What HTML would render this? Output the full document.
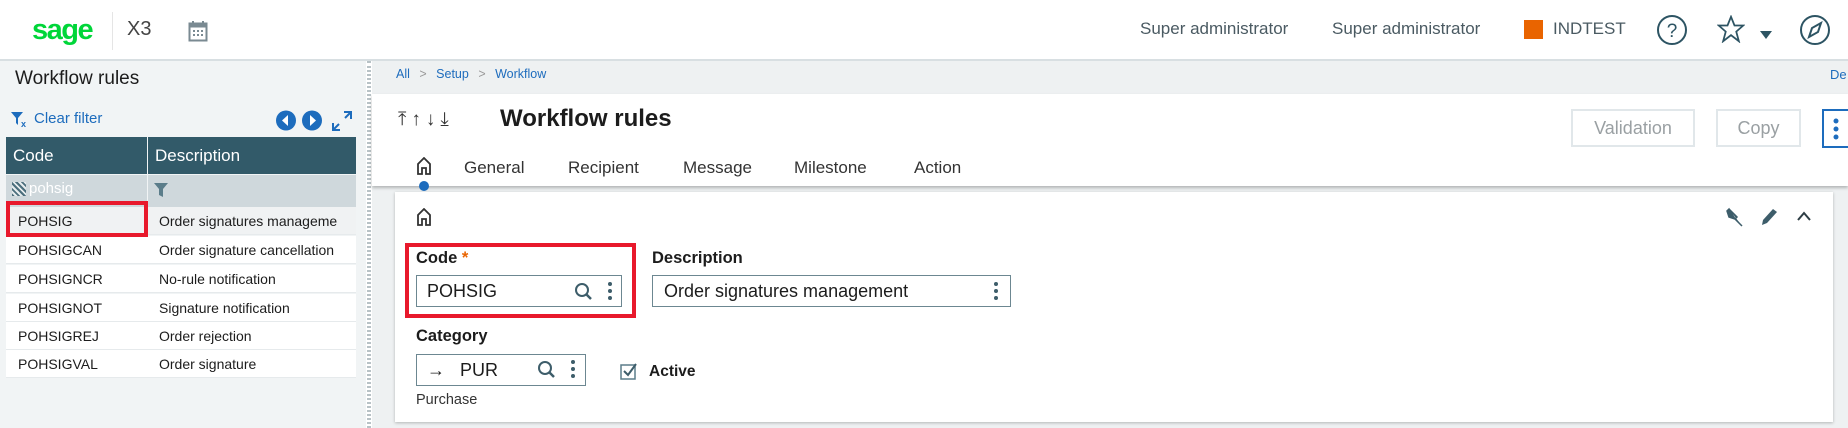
<!DOCTYPE html>
<html><head><meta charset="utf-8"><style>
*{box-sizing:border-box;margin:0;padding:0}
body{width:1848px;height:428px;overflow:hidden;background:#fff;font-family:"Liberation Sans",sans-serif;color:#1c1c1c;position:relative}
.a{position:absolute;white-space:nowrap}
.hdr{left:0;top:0;width:1848px;height:61px;background:#fff;border-bottom:2px solid #d8dfe2}
.lp{left:0;top:61px;width:366px;height:367px;background:#f1f4f5}
.rp{left:372px;top:61px;width:1476px;height:367px;background:#eef1f2}
.th{background:#325a69;color:#fff;font-size:17px;height:37px;line-height:37px;padding-left:7px}
.row{left:6px;width:350px;height:28px;background:#fff;border-bottom:1px solid #e6eaec;font-size:14px;line-height:28px;overflow:hidden}
.row span{position:absolute;top:0}
.btn{border:2px solid #e1e7ea;color:#9aa0a3;font-size:18px;text-align:center;line-height:34px;background:#fff}
.inp{border:1px solid #6c8791;background:#fff;height:32px;font-size:18px;line-height:30px}
.lbl{font-size:16.5px;font-weight:bold;color:#1c1c1c}
.tab{font-size:17px;color:#333;top:158px}
</style></head><body>
<div class="a hdr"></div>
<div class="a" style="left:32px;top:14px;font-size:29px;font-weight:bold;color:#00d639;letter-spacing:-1.5px">sage</div>
<div class="a" style="left:112px;top:12px;width:1px;height:38px;background:#e5e5e5"></div>
<div class="a" style="left:127px;top:18px;font-size:20px;color:#444">X3</div>
<svg class="a" style="left:188px;top:20px" width="20" height="22" viewBox="0 0 20 22"><rect x="1.5" y="3.5" width="17" height="17" fill="none" stroke="#7a8a92" stroke-width="2"/><rect x="1.5" y="3.5" width="17" height="4" fill="#7a8a92"/><line x1="5" y1="1" x2="5" y2="5" stroke="#7a8a92" stroke-width="2"/><line x1="15" y1="1" x2="15" y2="5" stroke="#7a8a92" stroke-width="2"/><g fill="#7a8a92"><rect x="5" y="10" width="2" height="2"/><rect x="9" y="10" width="2" height="2"/><rect x="13" y="10" width="2" height="2"/><rect x="5" y="14" width="2" height="2"/><rect x="9" y="14" width="2" height="2"/><rect x="13" y="14" width="2" height="2"/></g></svg>
<div class="a" style="left:1140px;top:19px;font-size:17px;color:#4a5a62">Super administrator</div>
<div class="a" style="left:1332px;top:19px;font-size:17px;color:#4a5a62">Super administrator</div>
<div class="a" style="left:1524px;top:20px;width:19px;height:19px;background:#e96400"></div>
<div class="a" style="left:1553px;top:19px;font-size:17px;color:#4a5a62">INDTEST</div>
<svg class="a" style="left:1656px;top:14px" width="32" height="32"><circle cx="16" cy="16" r="14" fill="none" stroke="#2d5463" stroke-width="2"/><text x="16" y="23" font-size="19" text-anchor="middle" fill="#2d5463" font-family="Liberation Sans">?</text></svg>
<svg class="a" style="left:1717px;top:15px" width="28" height="28" viewBox="0 0 32 32"><path d="M16 2 L20 12 L30 12 L22 19 L25 30 L16 23 L7 30 L10 19 L2 12 L12 12 Z" fill="none" stroke="#2d5463" stroke-width="2"/></svg>
<svg class="a" style="left:1760px;top:31px" width="12" height="9"><path d="M0 0 L12 0 L6 8 Z" fill="#2d5463"/></svg>
<svg class="a" style="left:1799px;top:14px" width="32" height="32" viewBox="0 0 32 32"><circle cx="16" cy="16" r="14" fill="none" stroke="#2d5463" stroke-width="2"/><path d="M22 9 L13 14 L10 23 L19 18 Z" fill="none" stroke="#2d5463" stroke-width="2"/></svg>

<div class="a lp"></div>
<div class="a" style="left:15px;top:68px;font-size:19px">Workflow rules</div>
<svg class="a" style="left:11px;top:111px" width="17" height="16"><path d="M0 1 H12 L7 7 V14 L5 12 V7 Z" fill="#1d6cbd"/><text x="10" y="16" font-size="9" fill="#1d6cbd" font-weight="bold">x</text></svg>
<div class="a" style="left:34px;top:110px;font-size:15px;color:#1d6cbd">Clear filter</div>
<svg class="a" style="left:276px;top:110px" width="48" height="21"><circle cx="10" cy="10.5" r="10" fill="#1d6cbd"/><path d="M12 5 L6 10.5 L12 16 Z" fill="#fff"/><circle cx="36" cy="10.5" r="10" fill="#1d6cbd"/><path d="M34 5 L40 10.5 L34 16 Z" fill="#fff"/></svg>
<svg class="a" style="left:332px;top:111px" width="20" height="20"><path d="M12 1 H19 V8 M19 1 L13 7 M8 19 H1 V12 M1 19 L7 13" fill="none" stroke="#1d6cbd" stroke-width="2"/></svg>
<div class="a th" style="left:6px;top:137px;width:141px">Code</div>
<div class="a th" style="left:148px;top:137px;width:208px">Description</div>
<div class="a" style="left:6px;top:175px;width:141px;height:32px;background:#cfd8dc"></div>
<div class="a" style="left:148px;top:175px;width:208px;height:32px;background:#cfd8dc"></div>
<div class="a" style="left:12px;top:182px;width:14px;height:14px;background:repeating-linear-gradient(45deg,#4c6f7d 0 2px,#e5ebed 2px 4px)"></div>
<div class="a" style="left:29px;top:180px;font-size:15px;color:#fff">pohsig</div>
<svg class="a" style="left:154px;top:183px" width="14" height="14"><path d="M0 0 H14 L9 6 V14 L5 12 V6 Z" fill="#5b7d8a"/></svg>
<div class="a row" style="top:207px;background:#f0f2f3"><span style="left:12px">POHSIG</span><span style="left:153px">Order signatures manageme</span></div>
<div class="a row" style="top:236px"><span style="left:12px">POHSIGCAN</span><span style="left:153px">Order signature cancellation</span></div>
<div class="a row" style="top:265px"><span style="left:12px">POHSIGNCR</span><span style="left:153px">No-rule notification</span></div>
<div class="a row" style="top:294px"><span style="left:12px">POHSIGNOT</span><span style="left:153px">Signature notification</span></div>
<div class="a row" style="top:322px"><span style="left:12px">POHSIGREJ</span><span style="left:153px">Order rejection</span></div>
<div class="a row" style="top:350px"><span style="left:12px">POHSIGVAL</span><span style="left:153px">Order signature</span></div>
<div class="a" style="left:6px;top:201px;width:142px;height:36px;border:4px solid #e8192c"></div>
<div class="a" style="left:367px;top:61px;width:4px;height:367px;border-left:2px dotted #b8c2c6;border-right:2px dotted #b8c2c6"></div>

<div class="a rp"></div>
<div class="a" style="left:396px;top:67px;font-size:12.5px;color:#1d6cbd">All <span style="color:#999;margin:0 6px">&gt;</span> Setup <span style="color:#999;margin:0 6px">&gt;</span> Workflow</div>
<div class="a" style="left:1830px;top:67px;font-size:13px;color:#1d6cbd">De</div>
<div class="a" style="left:372px;top:94px;width:1476px;height:92px;background:#fff;box-shadow:0 2px 3px rgba(0,0,0,.25)"></div>
<div class="a" style="left:398px;top:109px;font-size:19px;color:#333;letter-spacing:5px">⤒↑↓⤓</div>
<div class="a" style="left:500px;top:105px;font-size:24px;font-weight:bold">Workflow rules</div>
<div class="a btn" style="left:1571px;top:109px;width:124px;height:38px">Validation</div>
<div class="a btn" style="left:1716px;top:109px;width:85px;height:38px">Copy</div>
<div class="a" style="left:1822px;top:109px;width:40px;height:39px;border:2px solid #1d6cbd;background:#fff"></div>
<svg class="a" style="left:1833px;top:118px" width="6" height="22"><circle cx="3" cy="3" r="2.5" fill="#1d6cbd"/><circle cx="3" cy="11" r="2.5" fill="#1d6cbd"/><circle cx="3" cy="19" r="2.5" fill="#1d6cbd"/></svg>
<svg class="a" style="left:416px;top:157px" width="16" height="18"><path d="M2 17 V7 L8 1 L14 7 V17 H10 V11 H6 V17 Z" fill="none" stroke="#333" stroke-width="1.8"/></svg>
<div class="a" style="left:419px;top:181px;width:10px;height:10px;border-radius:50%;background:#1d6cbd"></div>
<div class="a tab" style="left:464px">General</div>
<div class="a tab" style="left:568px">Recipient</div>
<div class="a tab" style="left:683px">Message</div>
<div class="a tab" style="left:794px">Milestone</div>
<div class="a tab" style="left:914px">Action</div>

<div class="a" style="left:395px;top:192px;width:1438px;height:230px;background:#fff;box-shadow:0 1px 3px rgba(0,0,0,.25)"></div>
<svg class="a" style="left:416px;top:208px" width="16" height="18"><path d="M2 17 V7 L8 1 L14 7 V17 H10 V11 H6 V17 Z" fill="none" stroke="#333" stroke-width="1.8"/></svg>
<svg class="a" style="left:1725px;top:207px" width="20" height="20"><path d="M4 2 L12 10 L10 12 L17 19 M4 2 L2 4 L4 10 L10 12 Z" fill="#3d5d6a" stroke="#3d5d6a" stroke-width="1.5"/></svg>
<svg class="a" style="left:1760px;top:207px" width="18" height="20"><path d="M2 18 L3 13 L13 2 L17 5 L7 16 Z" fill="#3d5d6a"/></svg>
<svg class="a" style="left:1797px;top:211px" width="14" height="10"><path d="M1 9 L7 2 L13 9" fill="none" stroke="#2d3d44" stroke-width="2"/></svg>

<div class="a lbl" style="left:416px;top:249px">Code <span style="color:#e96400">*</span></div>
<div class="a inp" style="left:416px;top:275px;width:206px;padding-left:10px">POHSIG</div>
<svg class="a" style="left:574px;top:282px" width="20" height="20"><circle cx="8" cy="8" r="6" fill="none" stroke="#3d5d6a" stroke-width="2"/><path d="M12 12 L17 17" stroke="#3d5d6a" stroke-width="2.5"/></svg>
<svg class="a" style="left:607px;top:281px" width="6" height="20"><circle cx="3" cy="3" r="2" fill="#3d5d6a"/><circle cx="3" cy="10" r="2" fill="#3d5d6a"/><circle cx="3" cy="17" r="2" fill="#3d5d6a"/></svg>
<div class="a" style="left:405px;top:243px;width:231px;height:75px;border:4px solid #e8192c"></div>
<div class="a lbl" style="left:652px;top:249px">Description</div>
<div class="a inp" style="left:652px;top:275px;width:359px;padding-left:11px">Order signatures management</div>
<svg class="a" style="left:993px;top:281px" width="6" height="20"><circle cx="3" cy="3" r="2" fill="#3d5d6a"/><circle cx="3" cy="10" r="2" fill="#3d5d6a"/><circle cx="3" cy="17" r="2" fill="#3d5d6a"/></svg>
<div class="a lbl" style="left:416px;top:327px">Category</div>
<div class="a inp" style="left:416px;top:354px;width:170px;padding-left:10px">→ &nbsp;&nbsp;PUR</div>
<svg class="a" style="left:537px;top:360px" width="20" height="20"><circle cx="8" cy="8" r="6" fill="none" stroke="#3d5d6a" stroke-width="2"/><path d="M12 12 L17 17" stroke="#3d5d6a" stroke-width="2.5"/></svg>
<svg class="a" style="left:570px;top:359px" width="6" height="20"><circle cx="3" cy="3" r="2" fill="#3d5d6a"/><circle cx="3" cy="10" r="2" fill="#3d5d6a"/><circle cx="3" cy="17" r="2" fill="#3d5d6a"/></svg>
<svg class="a" style="left:620px;top:362px" width="18" height="18"><rect x="1" y="3" width="14" height="14" fill="none" stroke="#5b7d8a" stroke-width="1.5"/><path d="M4 9 L8 13 L16 2" fill="none" stroke="#3d5d6a" stroke-width="2"/></svg>
<div class="a" style="left:649px;top:363px;font-size:15.5px;font-weight:bold">Active</div>
<div class="a" style="left:416px;top:392px;font-size:14.5px;color:#333">Purchase</div>
</body></html>
